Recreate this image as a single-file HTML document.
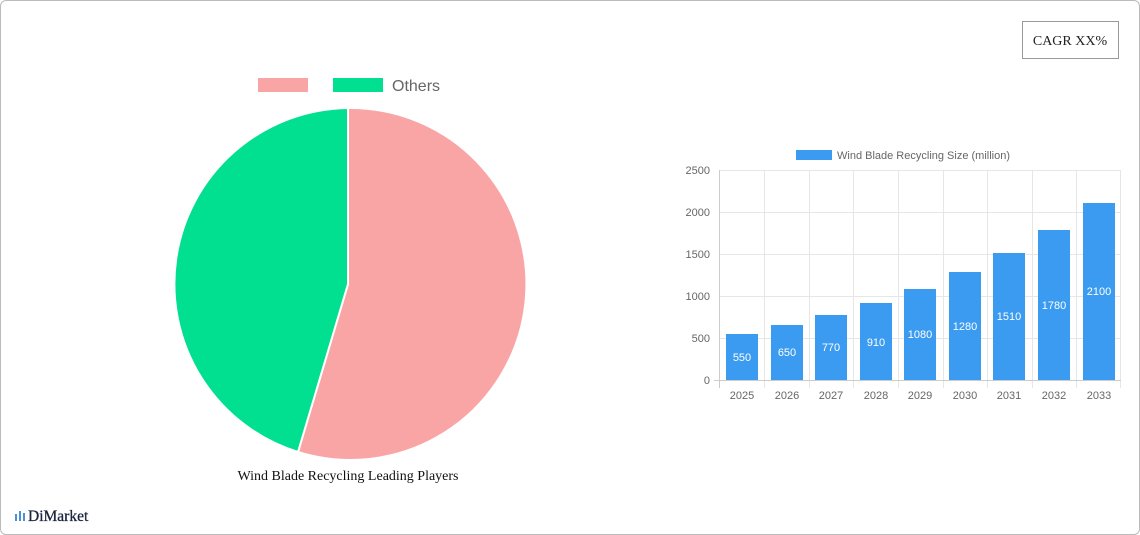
<!DOCTYPE html>
<html><head><style>
body{margin:0;background:#fff;font-family:"Liberation Sans",sans-serif}
.frame{position:absolute;left:0;top:0;width:1138px;height:533px;border:1px solid #bbb;border-radius:6px}
</style></head><body>
<div class="frame"></div>
<svg width="1140" height="535" style="position:absolute;left:0;top:0" font-family="Liberation Sans, sans-serif">
<rect x="1022.5" y="21.5" width="96" height="37" fill="#fff" stroke="#999"/>
<text x="1070" y="45" font-family="Liberation Serif, serif" font-size="14" text-anchor="middle" fill="#222">CAGR XX%</text>
<rect x="258" y="78" width="50" height="14" fill="#f9a5a5"/>
<rect x="333" y="78" width="50" height="14" fill="#00e090"/>
<text x="392" y="91" font-size="16" fill="#666">Others</text>
<path d="M348,284 L348,108 A176,176 0 1 1 298,452 Z" fill="#f9a5a5" stroke="#fff" stroke-width="2"/>
<path d="M348,284 L298,452 A176,176 0 0 1 348,108 Z" fill="#00e090" stroke="#fff" stroke-width="2"/>
<text x="348" y="480" font-family="Liberation Serif, serif" font-size="14" text-anchor="middle" fill="#111">Wind Blade Recycling Leading Players</text>
<g fill="#4a90d9"><rect x="15" y="514" width="2" height="7"/><rect x="19" y="511" width="2" height="10"/><rect x="23" y="513" width="2" height="8"/></g>
<text x="28" y="521" font-family="Liberation Serif, serif" font-size="15.5" fill="#1a2340" stroke="#1a2340" stroke-width="0.3">DiMarket</text>
<rect x="796" y="150" width="36" height="10" fill="#3a9bf0"/>
<text x="837" y="159" font-size="11" fill="#666">Wind Blade Recycling Size (million)</text>
<g stroke="#e6e6e6" stroke-width="1">
<line x1="720" y1="170.5" x2="1121" y2="170.5"/><line x1="720" y1="212.5" x2="1121" y2="212.5"/><line x1="720" y1="254.5" x2="1121" y2="254.5"/><line x1="720" y1="296.5" x2="1121" y2="296.5"/><line x1="720" y1="338.5" x2="1121" y2="338.5"/>
<line x1="764.5" y1="170" x2="764.5" y2="388"/><line x1="809.5" y1="170" x2="809.5" y2="388"/><line x1="853.5" y1="170" x2="853.5" y2="388"/><line x1="898.5" y1="170" x2="898.5" y2="388"/><line x1="943.5" y1="170" x2="943.5" y2="388"/><line x1="987.5" y1="170" x2="987.5" y2="388"/><line x1="1032.5" y1="170" x2="1032.5" y2="388"/><line x1="1076.5" y1="170" x2="1076.5" y2="388"/><line x1="1120.5" y1="170" x2="1120.5" y2="388"/>
</g>
<line x1="719.5" y1="170" x2="719.5" y2="388" stroke="#ccc"/>
<line x1="714" y1="380.5" x2="1121" y2="380.5" stroke="#ccc"/>
<g font-size="11" fill="#666" text-anchor="end">
<text x="710" y="174">2500</text><text x="710" y="216">2000</text><text x="710" y="258">1500</text><text x="710" y="300">1000</text><text x="710" y="342">500</text><text x="710" y="384">0</text></g>
<g fill="#3a9bf0">
<rect x="726" y="334" width="32" height="46"/><rect x="771" y="325" width="32" height="55"/><rect x="815" y="315" width="32" height="65"/><rect x="860" y="303" width="32" height="77"/><rect x="904" y="289" width="32" height="91"/><rect x="949" y="272" width="32" height="108"/><rect x="993" y="253" width="32" height="127"/><rect x="1038" y="230" width="32" height="150"/><rect x="1083" y="203" width="32" height="177"/></g>
<g font-size="11" fill="#fff" text-anchor="middle">
<text x="742" y="361">550</text><text x="787" y="356">650</text><text x="831" y="351">770</text><text x="876" y="346">910</text><text x="920" y="338">1080</text><text x="965" y="330">1280</text><text x="1009" y="320">1510</text><text x="1054" y="309">1780</text><text x="1099" y="295">2100</text></g>
<g font-size="11" fill="#666" text-anchor="middle">
<text x="742" y="399">2025</text><text x="787" y="399">2026</text><text x="831" y="399">2027</text><text x="876" y="399">2028</text><text x="920" y="399">2029</text><text x="965" y="399">2030</text><text x="1009" y="399">2031</text><text x="1054" y="399">2032</text><text x="1099" y="399">2033</text></g>
</svg>
</body></html>
